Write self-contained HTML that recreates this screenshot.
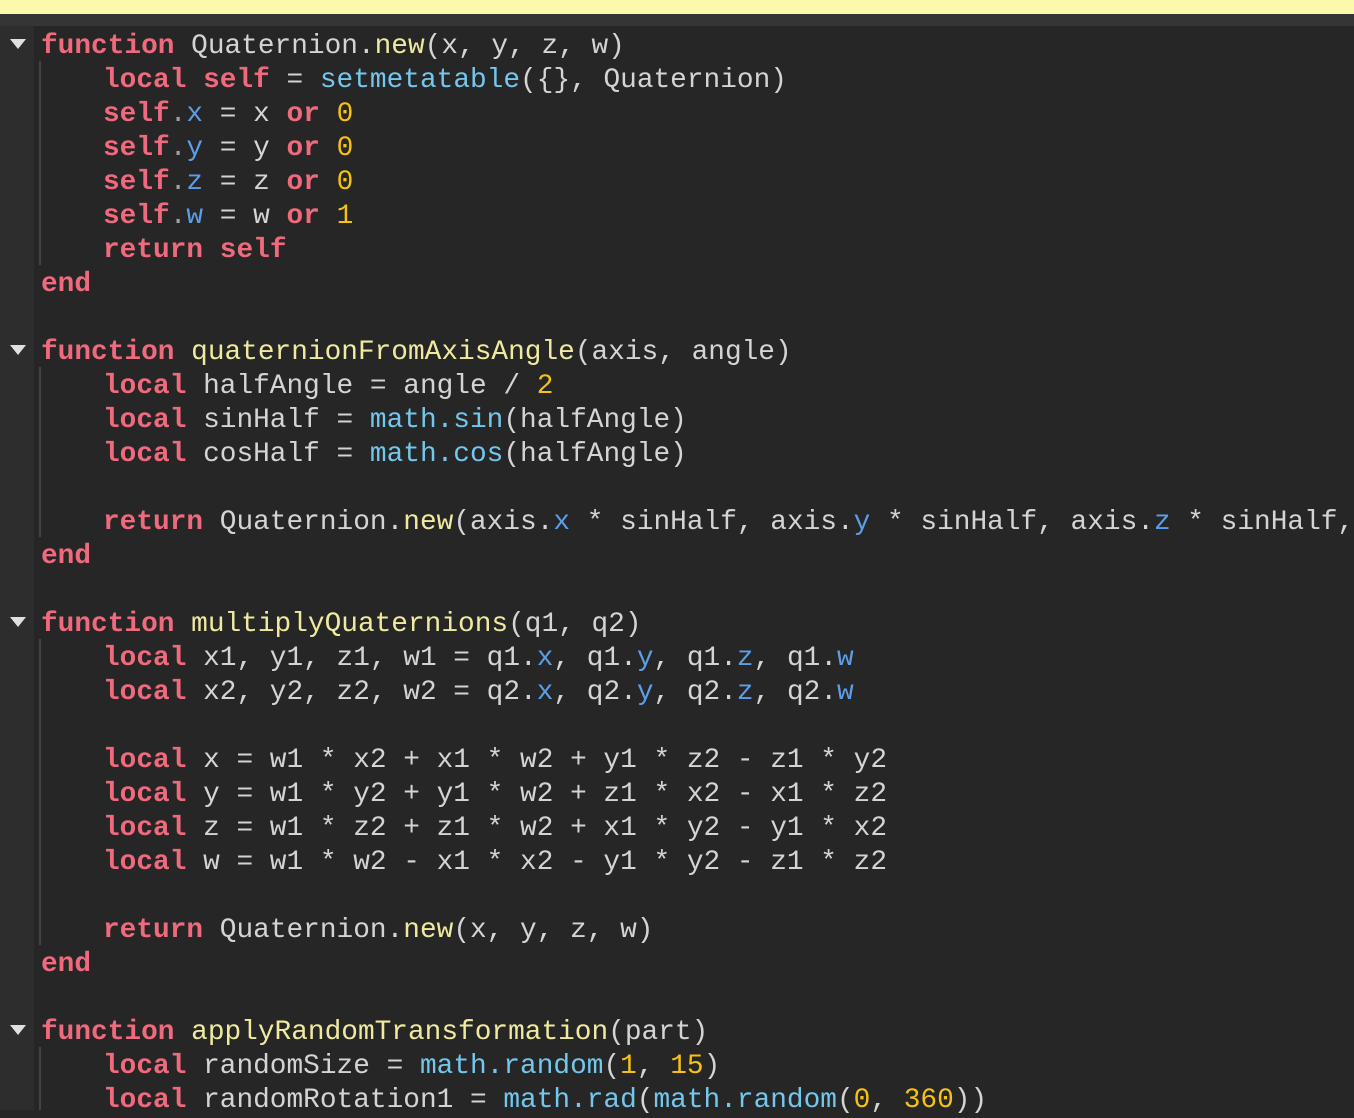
<!DOCTYPE html>
<html><head><meta charset="utf-8"><style>
html,body{margin:0;padding:0;width:1354px;height:1110px;overflow:hidden;background:#262626;}
#top{position:absolute;left:0;top:0;width:1354px;height:14px;background:#fdf9ab;}
#band{position:absolute;left:0;top:14px;width:1354px;height:12px;background:#353535;}
#gutter{position:absolute;left:0;top:26px;width:34px;height:1084px;background:#2d2d2d;}
.tri{position:absolute;left:10px;width:0;height:0;border-left:8px solid transparent;border-right:8px solid transparent;border-top:10px solid #e0e0e0;}
.guide{position:absolute;left:39px;width:2px;background:#434343;}
#code{position:absolute;left:41px;top:30px;width:1313px;overflow:hidden;font-family:"Liberation Mono",monospace;font-size:27.8px;line-height:34px;color:#d4d4d4;}
.l{height:34px;white-space:pre;}
.i{padding-left:62px;}
.k{color:#ef6a7d;font-weight:bold;}
.p{color:#5c9ee8;}
.f{color:#74c7ec;}
.n{color:#f5c211;}
.m{color:#f0eaa0;}
.d{color:#a0a0a0;}
</style></head><body>
<div id="top"></div><div id="band"></div><div id="gutter"></div>
<div class="tri" style="top:39px"></div>
<div class="tri" style="top:345px"></div>
<div class="tri" style="top:617px"></div>
<div class="tri" style="top:1025px"></div>
<div class="guide" style="top:61px;height:204px"></div>
<div class="guide" style="top:367px;height:170px"></div>
<div class="guide" style="top:639px;height:306px"></div>
<div class="guide" style="top:1047px;height:63px"></div>
<div id="code"><div class="l"><span class="k">function</span> Quaternion.<span class="m">new</span>(x, y, z, w)</div><div class="l i"><span class="k">local</span> <span class="k">self</span> = <span class="f">setmetatable</span>({}, Quaternion)</div><div class="l i"><span class="k">self</span><span class="d">.</span><span class="p">x</span> = x <span class="k">or</span> <span class="n">0</span></div><div class="l i"><span class="k">self</span><span class="d">.</span><span class="p">y</span> = y <span class="k">or</span> <span class="n">0</span></div><div class="l i"><span class="k">self</span><span class="d">.</span><span class="p">z</span> = z <span class="k">or</span> <span class="n">0</span></div><div class="l i"><span class="k">self</span><span class="d">.</span><span class="p">w</span> = w <span class="k">or</span> <span class="n">1</span></div><div class="l i"><span class="k">return</span> <span class="k">self</span></div><div class="l"><span class="k">end</span></div><div class="l"></div><div class="l"><span class="k">function</span> <span class="m">quaternionFromAxisAngle</span>(axis, angle)</div><div class="l i"><span class="k">local</span> halfAngle = angle / <span class="n">2</span></div><div class="l i"><span class="k">local</span> sinHalf = <span class="f">math.sin</span>(halfAngle)</div><div class="l i"><span class="k">local</span> cosHalf = <span class="f">math.cos</span>(halfAngle)</div><div class="l"></div><div class="l i"><span class="k">return</span> Quaternion.<span class="m">new</span>(axis.<span class="p">x</span> * sinHalf, axis.<span class="p">y</span> * sinHalf, axis.<span class="p">z</span> * sinHalf, <span class="f">math.cos</span>(halfAngle))</div><div class="l"><span class="k">end</span></div><div class="l"></div><div class="l"><span class="k">function</span> <span class="m">multiplyQuaternions</span>(q1, q2)</div><div class="l i"><span class="k">local</span> x1, y1, z1, w1 = q1.<span class="p">x</span>, q1.<span class="p">y</span>, q1.<span class="p">z</span>, q1.<span class="p">w</span></div><div class="l i"><span class="k">local</span> x2, y2, z2, w2 = q2.<span class="p">x</span>, q2.<span class="p">y</span>, q2.<span class="p">z</span>, q2.<span class="p">w</span></div><div class="l"></div><div class="l i"><span class="k">local</span> x = w1 * x2 + x1 * w2 + y1 * z2 - z1 * y2</div><div class="l i"><span class="k">local</span> y = w1 * y2 + y1 * w2 + z1 * x2 - x1 * z2</div><div class="l i"><span class="k">local</span> z = w1 * z2 + z1 * w2 + x1 * y2 - y1 * x2</div><div class="l i"><span class="k">local</span> w = w1 * w2 - x1 * x2 - y1 * y2 - z1 * z2</div><div class="l"></div><div class="l i"><span class="k">return</span> Quaternion.<span class="m">new</span>(x, y, z, w)</div><div class="l"><span class="k">end</span></div><div class="l"></div><div class="l"><span class="k">function</span> <span class="m">applyRandomTransformation</span>(part)</div><div class="l i"><span class="k">local</span> randomSize = <span class="f">math.random</span>(<span class="n">1</span>, <span class="n">15</span>)</div><div class="l i"><span class="k">local</span> randomRotation1 = <span class="f">math.rad</span>(<span class="f">math.random</span>(<span class="n">0</span>, <span class="n">360</span>))</div></div>
</body></html>
